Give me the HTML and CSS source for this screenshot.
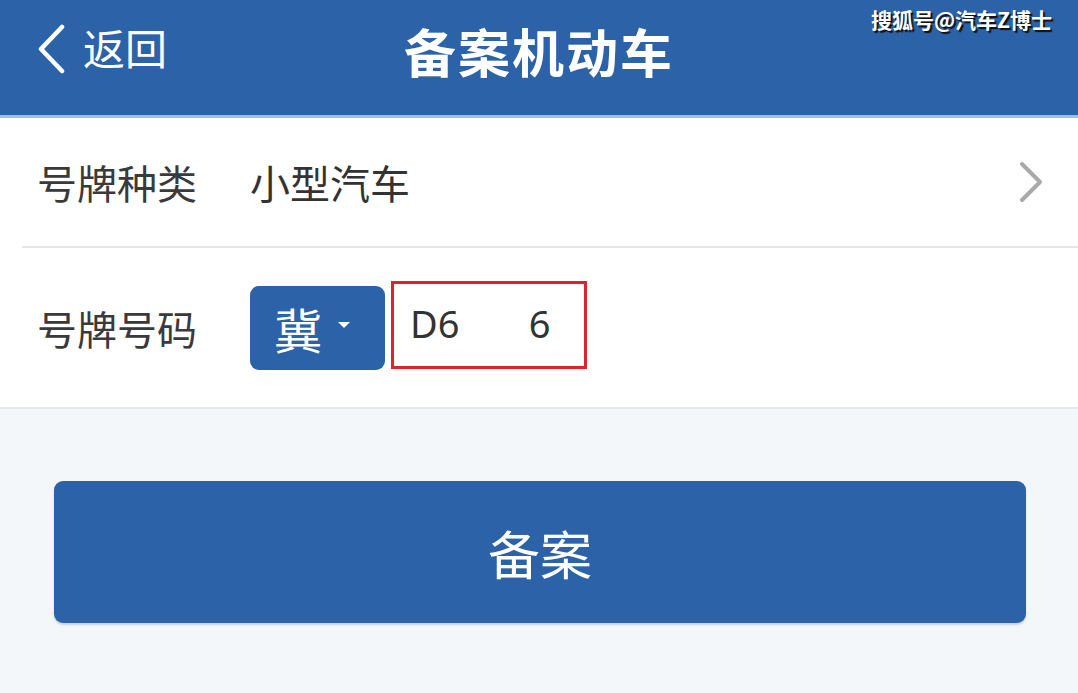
FILE: index.html
```html
<!DOCTYPE html>
<html lang="zh-CN">
<head>
    <meta charset="UTF-8">
    <meta name="viewport" content="width=device-width, initial-scale=1.0">
    <title>备案机动车</title>
    <link rel="stylesheet" href="styles.css">
</head>
<body>
    <div class="header">
        <a class="back" href="#">
            <svg class="back-icon" width="30" height="50" viewBox="0 0 30 50">
                <path d="M26 3 L5 25 L26 47" fill="none" stroke="#fff" stroke-width="4.5" stroke-linecap="round" stroke-linejoin="round"/>
            </svg>
            <span>返回</span>
        </a>
        <h1 class="title">备案机动车</h1>
        <div class="watermark">搜狐号@汽车Z博士</div>
    </div>

    <!-- form -->
    <div class="form">
        <div class="row row-type">
            <span class="label">号牌种类</span>
            <span class="value">小型汽车</span>
            <svg class="arrow" width="26" height="42" viewBox="0 0 26 42">
                <path d="M4 3 L22 21 L4 39" fill="none" stroke="#a9a9a9" stroke-width="4" stroke-linecap="round" stroke-linejoin="round"/>
            </svg>
        </div>
        <div class="row row-number">
            <span class="label">号牌号码</span>
            <div class="province">
                <span>冀</span>
                <span class="caret"></span>
            </div>
            <div class="plate">D6&nbsp;&nbsp;&nbsp;&nbsp;&nbsp;&nbsp;&nbsp;6</div>
        </div>
    </div>

    <div class="actions">
        <button type="button" class="submit">备案</button>
    </div>
</body>
</html>
```

FILE: styles.css
```css
body {
    margin: 0;
    font-family: "Noto Sans CJK SC", "Noto Sans", sans-serif;
    background-color: #f4f7fa;
    height: 693px;
    overflow: hidden;
}
.header {
    position: relative;
    height: 115px;
    background-color: #2c62a7;
    border-bottom: 3px solid #9cc0df;
    display: flex;
    align-items: center;
    justify-content: center;
}
.back {
    position: absolute;
    left: 36px;
    top: 24px;
    display: flex;
    align-items: center;
    gap: 17px;
    color: #fff;
    text-decoration: none;
    font-size: 42px;
    line-height: 52px;
}
.back span {
    margin-top: -4px;
}
.title {
    margin: 0 0 14px;
    color: #fff;
    font-size: 52px;
    font-weight: bold;
    letter-spacing: 2px;
}
.watermark {
    position: absolute;
    right: 26px;
    top: 4px;
    color: #fff;
    font-size: 21px;
    font-weight: bold;
    text-shadow: 2px 2px 1px #111;
}
.form {
    background-color: #fff;
    border-bottom: 2px solid #e3e6ea;
}
.row {
    display: flex;
    align-items: center;
    margin-left: 22px;
    padding-left: 15px;
}
.row-type {
    height: 128px;
    border-bottom: 2px solid #e6e6e6;
}
.row-number {
    height: 159px;
}
.label {
    font-size: 40px;
    color: #3a3a3a;
    width: 213px;
    flex-shrink: 0;
}
.value {
    font-size: 40px;
    color: #333;
    flex: 1;
}
.arrow {
    margin-right: 34px;
}
.province {
    width: 135px;
    height: 84px;
    box-sizing: border-box;
    background-color: #2c62a7;
    border-radius: 9px;
    color: #fff;
    font-size: 48px;
    display: flex;
    align-items: center;
    padding-left: 24px;
    gap: 16px;
}
.caret {
    width: 0;
    height: 0;
    border-left: 6px solid transparent;
    border-right: 6px solid transparent;
    border-top: 6px solid #fff;
    margin-top: -6px;
}
.plate {
    margin-left: 6px;
    width: 196px;
    height: 88px;
    box-sizing: border-box;
    border: 3px solid #e0232b;
    font-family: "Noto Sans", sans-serif;
    font-size: 38px;
    color: #333;
    display: flex;
    align-items: center;
    padding-left: 16px;
    padding-bottom: 4px;
    margin-top: -6px;
}
.actions {
    padding: 72px 52px 0 54px;
}
.submit {
    width: 100%;
    height: 142px;
    background-color: #2c62a7;
    color: #fff;
    border: none;
    border-radius: 9px;
    font-family: "Noto Sans CJK SC", sans-serif;
    font-size: 52px;
    cursor: pointer;
    box-shadow: 0 2px 2px rgba(0, 0, 0, 0.15);
}
```
